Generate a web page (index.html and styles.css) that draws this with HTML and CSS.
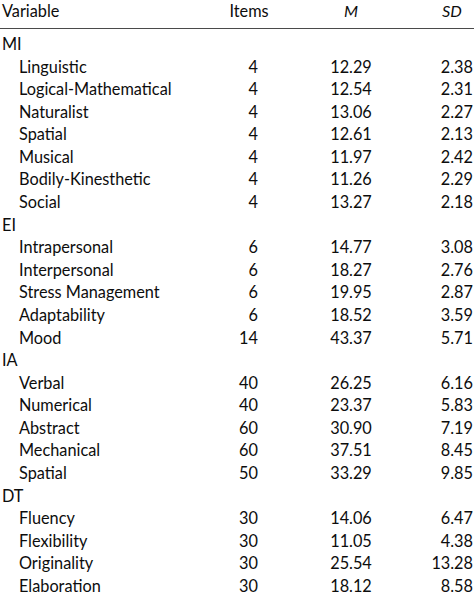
FILE: index.html
```html
<!DOCTYPE html>
<html>
<head>
<meta charset="utf-8">
<link rel="stylesheet" href="styles.css">
</head>
<body>
<div class="table">
  <div class="row head">
    <div class="c-var">Variable</div>
    <div class="c-items">Items</div>
    <div class="c-m"><i>M</i></div>
    <div class="c-sd"><i>SD</i></div>
  </div>
  <div class="body">
    <div class="row group"><div class="c-var">MI</div></div>
    <div class="row"><div class="c-var sub">Linguistic</div><div class="c-items">4</div><div class="c-m">12.29</div><div class="c-sd">2.38</div></div>
    <div class="row"><div class="c-var sub">Logical-Mathematical</div><div class="c-items">4</div><div class="c-m">12.54</div><div class="c-sd">2.31</div></div>
    <div class="row"><div class="c-var sub">Naturalist</div><div class="c-items">4</div><div class="c-m">13.06</div><div class="c-sd">2.27</div></div>
    <div class="row"><div class="c-var sub">Spatial</div><div class="c-items">4</div><div class="c-m">12.61</div><div class="c-sd">2.13</div></div>
    <div class="row"><div class="c-var sub">Musical</div><div class="c-items">4</div><div class="c-m">11.97</div><div class="c-sd">2.42</div></div>
    <div class="row"><div class="c-var sub">Bodily-Kinesthetic</div><div class="c-items">4</div><div class="c-m">11.26</div><div class="c-sd">2.29</div></div>
    <div class="row"><div class="c-var sub">Social</div><div class="c-items">4</div><div class="c-m">13.27</div><div class="c-sd">2.18</div></div>
    <div class="row group"><div class="c-var">EI</div></div>
    <div class="row"><div class="c-var sub">Intrapersonal</div><div class="c-items">6</div><div class="c-m">14.77</div><div class="c-sd">3.08</div></div>
    <div class="row"><div class="c-var sub">Interpersonal</div><div class="c-items">6</div><div class="c-m">18.27</div><div class="c-sd">2.76</div></div>
    <div class="row"><div class="c-var sub">Stress Management</div><div class="c-items">6</div><div class="c-m">19.95</div><div class="c-sd">2.87</div></div>
    <div class="row"><div class="c-var sub">Adaptability</div><div class="c-items">6</div><div class="c-m">18.52</div><div class="c-sd">3.59</div></div>
    <div class="row"><div class="c-var sub">Mood</div><div class="c-items">14</div><div class="c-m">43.37</div><div class="c-sd">5.71</div></div>
    <div class="row group"><div class="c-var">IA</div></div>
    <div class="row"><div class="c-var sub">Verbal</div><div class="c-items">40</div><div class="c-m">26.25</div><div class="c-sd">6.16</div></div>
    <div class="row"><div class="c-var sub">Numerical</div><div class="c-items">40</div><div class="c-m">23.37</div><div class="c-sd">5.83</div></div>
    <div class="row"><div class="c-var sub">Abstract</div><div class="c-items">60</div><div class="c-m">30.90</div><div class="c-sd">7.19</div></div>
    <div class="row"><div class="c-var sub">Mechanical</div><div class="c-items">60</div><div class="c-m">37.51</div><div class="c-sd">8.45</div></div>
    <div class="row"><div class="c-var sub">Spatial</div><div class="c-items">50</div><div class="c-m">33.29</div><div class="c-sd">9.85</div></div>
    <div class="row group"><div class="c-var">DT</div></div>
    <div class="row"><div class="c-var sub">Fluency</div><div class="c-items">30</div><div class="c-m">14.06</div><div class="c-sd">6.47</div></div>
    <div class="row"><div class="c-var sub">Flexibility</div><div class="c-items">30</div><div class="c-m">11.05</div><div class="c-sd">4.38</div></div>
    <div class="row"><div class="c-var sub">Originality</div><div class="c-items">30</div><div class="c-m">25.54</div><div class="c-sd">13.28</div></div>
    <div class="row"><div class="c-var sub">Elaboration</div><div class="c-items">30</div><div class="c-m">18.12</div><div class="c-sd">8.58</div></div>
  </div>
</div>
</body>
</html>
```

FILE: styles.css
```css
html, body {
  margin: 0;
  padding: 0;
  background: #ffffff;
}
body {
  font-family: Lato, "Open Sans", sans-serif;
  font-size: 16.3px;
  color: #0d0d0d;
  width: 474px;
  overflow: hidden;
}
.table {
  display: flex;
  flex-direction: column;
}
.row {
  display: grid;
  grid-template-columns: 220px 58px 146px 50px;
  height: 22.58px;
  line-height: 22.58px;
  white-space: nowrap;
}
.head {
  height: 28px;
  line-height: 22px;
  border-bottom: 1.5px solid #4a4a4a;
}
.body {
  padding-top: 4px;
  display: flex;
  flex-direction: column;
}
.c-var {
  padding-left: 2px;
}
.c-var.sub {
  padding-left: 19px;
}
.c-items {
  text-align: right;
  padding-right: 20px;
}
.c-m {
  text-align: center;
}
.c-sd {
  text-align: right;
  padding-right: 1px;
}
.head .c-items {
  text-align: center;
  padding-right: 0;
}
.head .c-m {
  text-align: center;
}
.head .c-sd {
  text-align: center;
  padding-left: 6px;
  padding-right: 0;
}
```
